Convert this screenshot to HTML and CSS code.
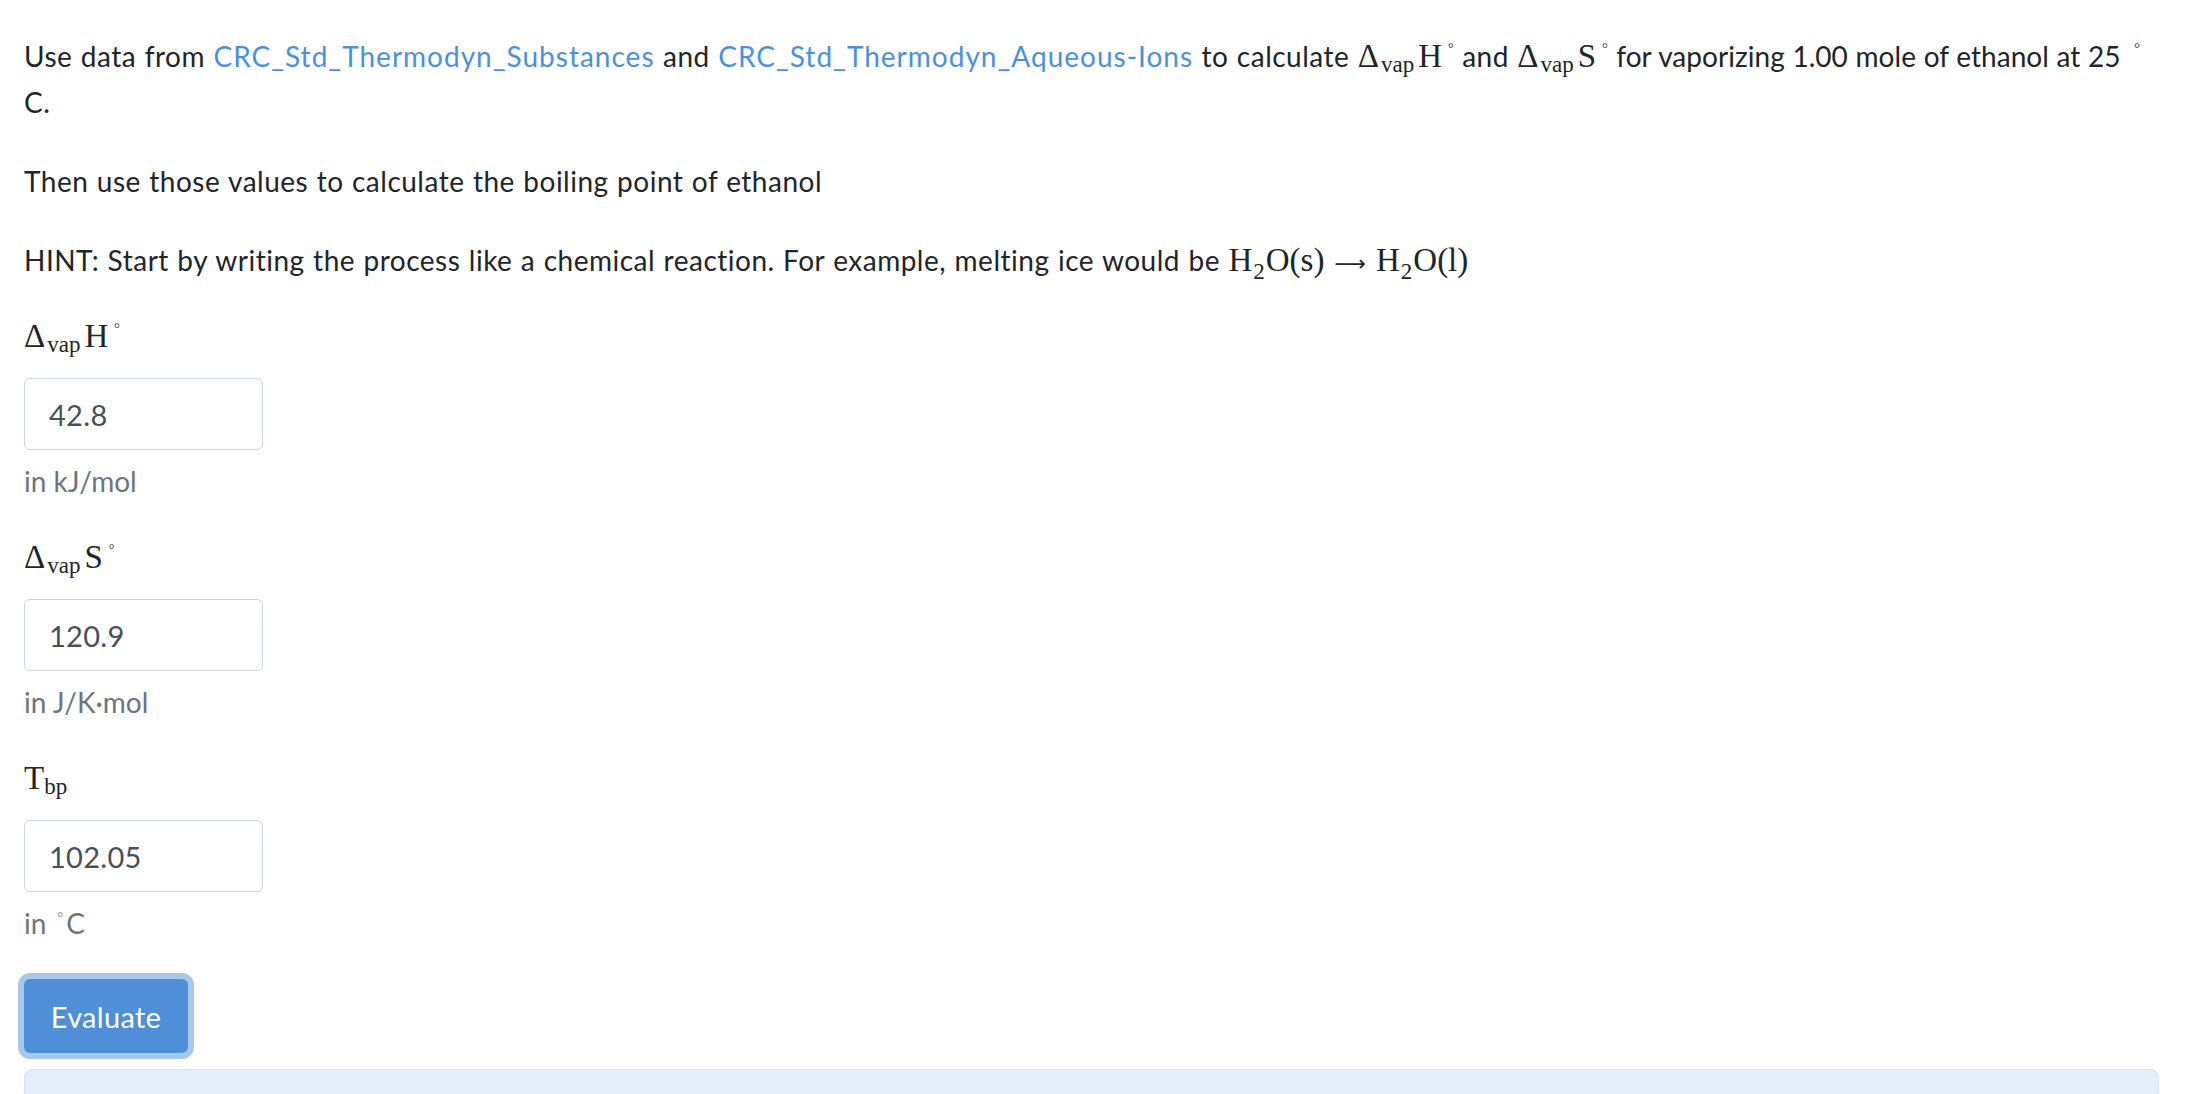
FILE: index.html
```html
<!DOCTYPE html>
<html lang="en">
<head>
<meta charset="utf-8">
<title>Vaporization of ethanol</title>
<link rel="stylesheet" href="styles.css">
</head>
<body>
<main class="page">
  <p class="q">Use data from <a class="link" href="#">CRC_Std_Thermodyn_Substances</a> and <a class="link" href="#">CRC_Std_Thermodyn_Aqueous-Ions</a> to calculate <span class="m">Δ<span class="sub">vap</span>H<span class="deg">°</span></span> and <span class="m">Δ<span class="sub">vap</span>S<span class="deg">°</span></span> <span class="tight">for vaporizing 1.00 mole of ethanol at <span class="nowrap">25 <span class="deg">°</span></span></span><br>C.</p>
  <p class="q">Then use those values to calculate the boiling point of ethanol</p>
  <p class="q hint">HINT: Start by writing the process like a chemical reaction. For example, melting ice would be <span class="m">H<span class="sub2">2</span>O(s)<span class="arrow">⟶</span>H<span class="sub2">2</span>O(l)</span></p>

  <div class="field">
    <div class="field-label"><span class="m">Δ<span class="sub">vap</span>H<span class="deg">°</span></span></div>
    <input class="form-input" type="text" value="42.8">
    <div class="help">in kJ/mol</div>
  </div>

  <div class="field">
    <div class="field-label"><span class="m">Δ<span class="sub">vap</span>S<span class="deg">°</span></span></div>
    <input class="form-input" type="text" value="120.9">
    <div class="help">in J/K·mol</div>
  </div>

  <div class="field last">
    <div class="field-label"><span class="m">T<span class="sub sub-t">bp</span></span></div>
    <input class="form-input" type="text" value="102.05">
    <div class="help">in <span class="deg deg-unit">°</span>C</div>
  </div>

  <div class="actions">
    <button class="btn" type="button">Evaluate</button>
  </div>

  <div class="alert"></div>
</main>
</body>
</html>
```
FILE: styles.css
```css
html, body {
  margin: 0;
  padding: 0;
  background: #ffffff;
  overflow: hidden;
}

body {
  font-family: Lato, "Open Sans", sans-serif;
  font-size: 28px;
  line-height: 46px;
  color: #212529;
}

.page {
  padding: 33px 33px 0 24px;
}

.q {
  margin: 0 0 33px;
  letter-spacing: 0.5px;
  word-spacing: 0.8px;
}

.q.hint {
  margin-bottom: 30px;
}

.link {
  color: #4a90e2;
  text-decoration: none;
  letter-spacing: 1px;
}

.tight {
  letter-spacing: 0.05px;
  word-spacing: 0.4px;
}

.nowrap {
  white-space: nowrap;
}

.m {
  font-family: "Liberation Serif", "Times New Roman", serif;
  font-size: 33px;
  line-height: 0;
  letter-spacing: 0;
  word-spacing: 0;
}

.sub {
  font-size: 23px;
  line-height: 0;
  vertical-align: -5px;
  margin: 0 4px 0 2px;
}

.sub-t {
  margin: 0;
}

.sub2 {
  font-size: 23px;
  line-height: 0;
  vertical-align: -8px;
  margin: 0 1px;
}

.arrow {
  font-family: "DejaVu Sans", sans-serif;
  font-size: 22px;
  line-height: 0;
  margin: 0 10px;
}

.deg {
  font-family: "Liberation Serif", serif;
  font-size: 14px;
  line-height: 0;
  letter-spacing: 0;
  vertical-align: 14px;
  margin: 0 0 0 6px;
}

.deg-unit {
  margin: 0 3px 0 4px;
  vertical-align: 12px;
}

.field {
  margin-bottom: 32px;
}

.field.last {
  margin-bottom: 35px;
}

.field-label {
  line-height: 46px;
  margin-bottom: 19px;
}

.form-input {
  display: block;
  box-sizing: border-box;
  width: 239px;
  height: 72px;
  padding: 0 24px;
  margin: 0;
  border: 1px solid #ced4da;
  border-radius: 6px;
  background: #ffffff;
  font-family: Lato, "Open Sans", sans-serif;
  font-size: 29px;
  letter-spacing: 0.3px;
  color: #495057;
  outline: none;
}

.help {
  margin-top: 10px;
  line-height: 42px;
  color: #6c757d;
}

.actions {
  display: flex;
}

.btn {
  width: 164px;
  height: 74px;
  padding: 0;
  border: none;
  border-radius: 6px;
  background: #4f8fd8;
  color: #ffffff;
  font-family: Lato, "Open Sans", sans-serif;
  font-size: 29px;
  letter-spacing: 0.3px;
  box-shadow: 0 0 0 6px rgba(79, 143, 216, 0.5);
  cursor: pointer;
}

.alert {
  margin-top: 16px;
  height: 90px;
  background: #e4eef9;
  border: 1px solid #d4e3f5;
  border-radius: 8px;
}
```
